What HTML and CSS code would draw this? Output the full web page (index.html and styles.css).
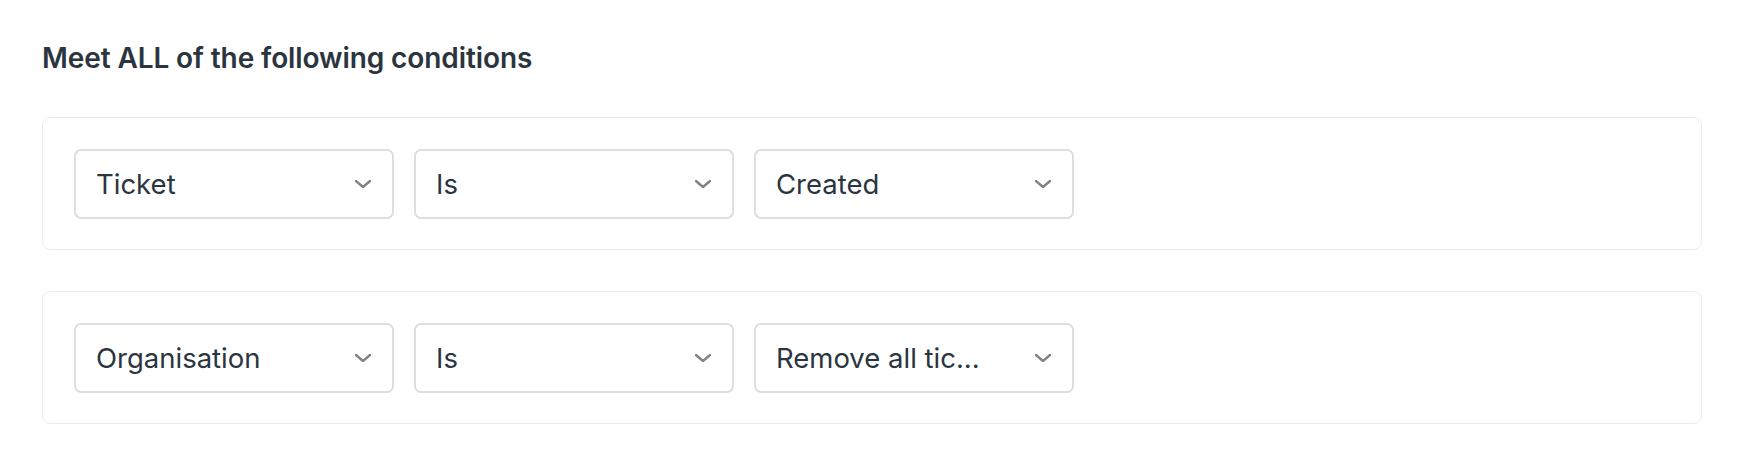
FILE: index.html
```html
<!DOCTYPE html>
<html>
<head>
<meta charset="utf-8">
<link rel="stylesheet" href="styles.css">
</head>
<body>
<div class="page">
  <h2 class="title">Meet ALL of the following conditions</h2>
  <div class="conditions">
    <div class="card">
      <div class="select"><span class="value">Ticket</span><svg class="chev" viewBox="0 0 16 8"><path d="M1 1l7 6 7-6"/></svg></div>
      <div class="select"><span class="value">Is</span><svg class="chev" viewBox="0 0 16 8"><path d="M1 1l7 6 7-6"/></svg></div>
      <div class="select"><span class="value">Created</span><svg class="chev" viewBox="0 0 16 8"><path d="M1 1l7 6 7-6"/></svg></div>
    </div>
    <div class="card">
      <div class="select"><span class="value">Organisation</span><svg class="chev" viewBox="0 0 16 8"><path d="M1 1l7 6 7-6"/></svg></div>
      <div class="select"><span class="value">Is</span><svg class="chev" viewBox="0 0 16 8"><path d="M1 1l7 6 7-6"/></svg></div>
      <div class="select"><span class="value">Remove all tic...</span><svg class="chev" viewBox="0 0 16 8"><path d="M1 1l7 6 7-6"/></svg></div>
    </div>
  </div>
</div>
</body>
</html>
```

FILE: styles.css
```css
* { box-sizing: border-box; }
html, body { margin: 0; padding: 0; background: #ffffff; }
body { font-family: Inter, "Noto Sans", "Liberation Sans", sans-serif; color: #2b3540; }
.page { padding: 39px 38px 0 42px; }
.title {
  margin: 0;
  font-size: 28px;
  line-height: 38px;
  font-weight: 600;
  color: #2b3540;
  letter-spacing: -0.1px;
}
.conditions {
  margin-top: 40px;
  display: flex;
  flex-direction: column;
  gap: 41px;
}
.card {
  border: 1px solid #ebebeb;
  border-radius: 8px;
  padding: 31px 31px 30px;
  display: flex;
  gap: 20px;
}
.select {
  width: 320px;
  height: 70px;
  border: 2px solid #dedede;
  border-radius: 7px;
  padding: 0 21px 0 20px;
  display: flex;
  align-items: center;
  justify-content: space-between;
  font-size: 27.5px;
}
.value { white-space: nowrap; }
.chev {
  width: 16px;
  height: 8px;
  fill: none;
  stroke: #838383;
  stroke-width: 2.4;
  stroke-linecap: round;
  stroke-linejoin: round;
}
```
